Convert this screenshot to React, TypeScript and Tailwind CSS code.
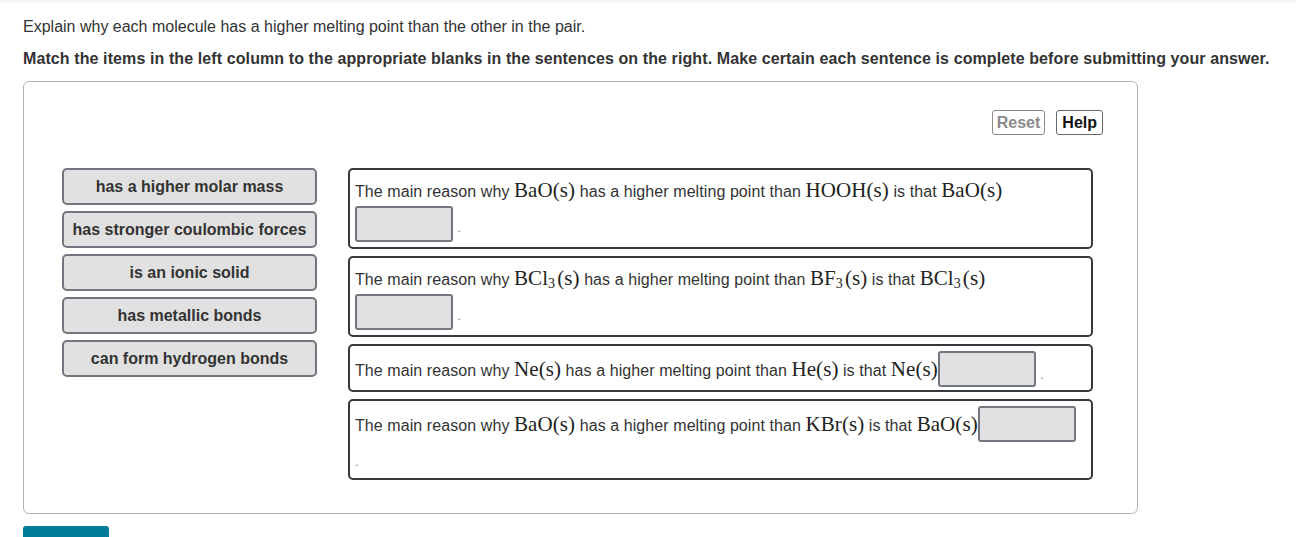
import React from "react";

const M = ({ children }: { children: React.ReactNode }) => (
  <span className="text-[21px] text-[#222]" style={{ fontFamily: '"Liberation Serif", "Times New Roman", serif' }}>
    {children}
  </span>
);

const Sub = ({ children }: { children: React.ReactNode }) => (
  <span className="inline-block text-[14px] leading-none relative top-[3px] mr-[2px]">{children}</span>
);

const Blank = () => (
  <span className="inline-block align-top w-[98px] h-[36px] bg-[#e1e1e1] border-2 border-[#75757f] rounded-[3px]" />
);

const Dot = () => <span className="relative top-[3px] text-[#777] text-[12px]">.</span>;

const items = [
  "has a higher molar mass",
  "has stronger coulombic forces",
  "is an ionic solid",
  "has metallic bonds",
  "can form hydrogen bonds",
];

const box = "border-2 border-[#333a3d] rounded-[5px] px-[5px] pt-[5px]";

export default function App() {
  return (
    <div className="w-[1296px] h-[537px] overflow-hidden bg-white text-[#333]" style={{ fontFamily: '"Liberation Sans", Arial, sans-serif' }}>
      <div className="h-[3px] bg-[#f5f5f5]" />
      <div className="px-[23px]">
        <p className="mt-[15px] text-[16px] leading-[18px]">
          Explain why each molecule has a higher melting point than the other in the pair.
        </p>
        <p className="mt-[14px] text-[16px] leading-[18px] font-bold tracking-[0.1px]">
          Match the items in the left column to the appropriate blanks in the sentences on the right. Make certain each sentence is complete before submitting your answer.
        </p>
        <div className="mt-[13px] w-[1115px] h-[433px] border border-[#b3b3b3] rounded-[6px]">
          <div className="flex justify-end gap-[11px] pt-[28px] pr-[34px]">
            <button className="h-[25px] px-[4px] border border-[#8a8a8a] rounded-[3px] text-[16px] font-bold text-[#8a8a8a] leading-none bg-white">
              Reset
            </button>
            <button className="h-[25px] px-[5px] border border-[#666] rounded-[3px] text-[16px] font-bold text-[#111] leading-none bg-white">
              Help
            </button>
          </div>
          <div className="flex mt-[33px] pl-[38px]">
            <div className="flex flex-col gap-[6px] w-[255px]">
              {items.map((t) => (
                <div
                  key={t}
                  className="h-[37px] flex items-center justify-center bg-[#e1e1e1] border-2 border-[#75757f] rounded-[5px] text-[16px] font-bold text-[#333]"
                >
                  {t}
                </div>
              ))}
            </div>
            <div className="ml-[31px] w-[745px] flex flex-col gap-[7px] text-[16px] tracking-[0.08px]">
              <div className={`${box} pb-[5px]`}>
                <div className="h-[31px] leading-[31px] whitespace-nowrap">
                  The main reason why <M>BaO(s)</M> has a higher melting point than <M>HOOH(s)</M> is that <M>BaO(s)</M>
                </div>
                <div className="h-[36px] leading-[36px]">
                  <Blank /> <Dot />
                </div>
              </div>
              <div className={`${box} pb-[5px]`}>
                <div className="h-[31px] leading-[31px] whitespace-nowrap">
                  The main reason why <M>BCl<Sub>3</Sub>(s)</M> has a higher melting point than{" "}
                  <M>BF<Sub>3</Sub>(s)</M> is that <M>BCl<Sub>3</Sub>(s)</M>
                </div>
                <div className="h-[36px] leading-[36px]">
                  <Blank /> <Dot />
                </div>
              </div>
              <div className={`${box} pb-[3px]`}>
                <div className="h-[36px] leading-[36px] whitespace-nowrap">
                  The main reason why <M>Ne(s)</M> has a higher melting point than <M>He(s)</M> is that <M>Ne(s)</M>
                  <Blank /> <Dot />
                </div>
              </div>
              <div className={`${box} pb-[4px]`}>
                <div className="h-[36px] leading-[36px] whitespace-nowrap">
                  The main reason why <M>BaO(s)</M> has a higher melting point than <M>KBr(s)</M> is that <M>BaO(s)</M>
                  <Blank />
                </div>
                <div className="h-[32px] leading-[32px]">
                  <Dot />
                </div>
              </div>
            </div>
          </div>
        </div>
        <div className="mt-[12px] w-[86px] h-[20px] bg-[#007c9b] rounded-t-[3px]" />
      </div>
    </div>
  );
}
